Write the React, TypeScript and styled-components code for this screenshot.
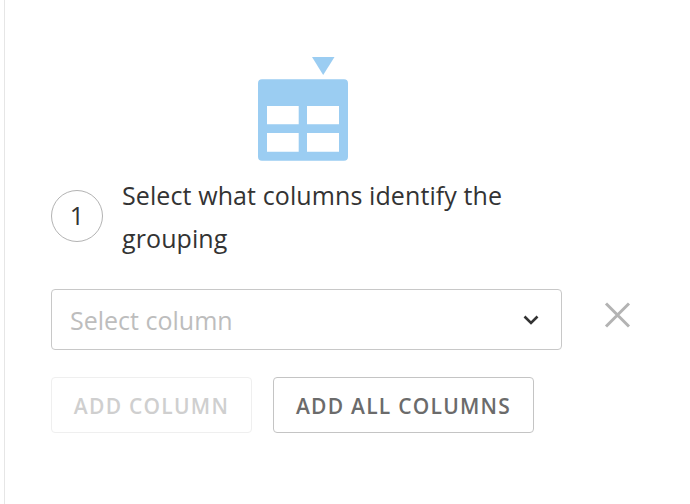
import React from "react";
import styled, { createGlobalStyle } from "styled-components";

const Global = createGlobalStyle`
  html, body { margin: 0; padding: 0; background: #fff; }
  body { font-family: "Open Sans", "Liberation Sans", sans-serif; }
`;

const Panel = styled.div`
  box-sizing: border-box;
  width: 690px;
  height: 504px;
  margin-left: 4px;
  border-left: 1px solid #e6e6e6;
  padding: 57px 0 0 46px;
  overflow: hidden;
`;

const IconSlot = styled.div`
  width: 511px;
  height: 104px;
  padding-left: 207px;
  box-sizing: border-box;
`;

const Step = styled.div`
  display: flex;
  align-items: flex-start;
  gap: 19px;
  margin-top: 13px;
  width: 500px;
`;

const Badge = styled.div`
  flex: none;
  box-sizing: border-box;
  width: 52px;
  height: 52px;
  margin-top: 16px;
  padding-bottom: 2px;
  border: 1px solid #b3b3b3;
  border-radius: 50%;
  display: flex;
  align-items: center;
  justify-content: center;
  font-size: 25px;
  color: #333;
`;

const StepText = styled.div`
  font-size: 25px;
  letter-spacing: 0.1px;
  line-height: 43px;
  color: #333;
`;

const SelectRow = styled.div`
  display: flex;
  align-items: center;
  margin-top: 29px;
`;

const SelectBox = styled.div`
  box-sizing: border-box;
  width: 511px;
  height: 61px;
  border: 1px solid #c8c8c8;
  border-radius: 4px;
  display: flex;
  align-items: center;
  justify-content: space-between;
  padding: 0 22px 0 18px;
  font-size: 25px;
  color: #bdbdbd;
`;

const Clear = styled.div`
  margin-left: 42px;
  width: 28px;
  height: 28px;
  margin-top: -10px;
`;

const Buttons = styled.div`
  display: flex;
  gap: 21px;
  margin-top: 27px;
`;

const Button = styled.div<{ $disabled?: boolean }>`
  box-sizing: border-box;
  height: 56px;
  width: ${(p) => (p.$disabled ? "201px" : "261px")};
  padding-top: 2px;
  border: 1px solid ${(p) => (p.$disabled ? "#efefef" : "#c4c4c4")};
  border-radius: 4px;
  display: flex;
  align-items: center;
  justify-content: center;
  font-size: 21px;
  font-weight: 600;
  letter-spacing: 1.25px;
  color: ${(p) => (p.$disabled ? "#cfcfcf" : "#6b6b6b")};
`;

export default function App() {
  return (
    <Panel>
      <Global />
      <IconSlot>
        <svg width="90" height="104" viewBox="0 0 90 104">
          <path d="M54 0H76.5L65.2 18Z" fill="#9bcdf2" />
          <path
            fillRule="evenodd"
            fill="#9bcdf2"
            d="M4 22.3H86a4 4 0 0 1 4 4V99.7a4 4 0 0 1-4 4H4a4 4 0 0 1-4-4V26.3a4 4 0 0 1 4-4ZM9 49V67.3H40.7V49ZM49 49V67.3H81V49ZM9 76V94.7H40.7V76ZM49 76V94.7H81V76Z"
          />
        </svg>
      </IconSlot>
      <Step>
        <Badge>1</Badge>
        <StepText>Select what columns identify the grouping</StepText>
      </Step>
      <SelectRow>
        <SelectBox>
          Select column
          <svg width="16" height="10" viewBox="0 0 16 10">
            <path d="M1.5 1.5L8 8L14.5 1.5" fill="none" stroke="#333" strokeWidth="2.6" />
          </svg>
        </SelectBox>
        <Clear>
          <svg width="28" height="28" viewBox="0 0 28 28">
            <path d="M2 2.5L25 25.5M25 2.5L2 25.5" fill="none" stroke="#b3b3b3" strokeWidth="3" />
          </svg>
        </Clear>
      </SelectRow>
      <Buttons>
        <Button $disabled>ADD COLUMN</Button>
        <Button>ADD ALL COLUMNS</Button>
      </Buttons>
    </Panel>
  );
}
